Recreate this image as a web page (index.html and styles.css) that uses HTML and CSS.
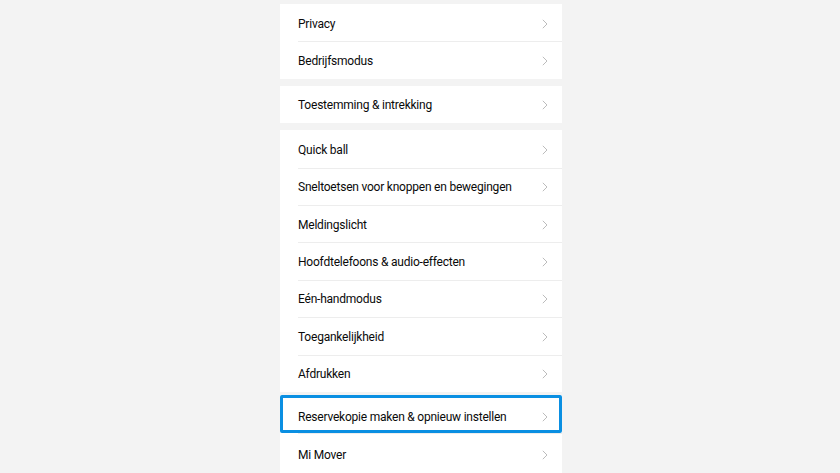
FILE: index.html
```html
<!DOCTYPE html>
<html>
<head>
<meta charset="utf-8">
<link rel="stylesheet" href="styles.css">
</head>
<body>
<div class="page">
  <div class="panel">
    <div class="group g1">
      <div class="row"><span class="label">Privacy</span><svg class="chev" width="6" height="10" viewBox="0 0 6 10"><polyline points="0.8,0.8 5,5 0.8,9.2"/></svg></div>
      <div class="row"><span class="label">Bedrijfsmodus</span><svg class="chev" width="6" height="10" viewBox="0 0 6 10"><polyline points="0.8,0.8 5,5 0.8,9.2"/></svg></div>
    </div>
    <div class="group">
      <div class="row"><span class="label">Toestemming &amp; intrekking</span><svg class="chev" width="6" height="10" viewBox="0 0 6 10"><polyline points="0.8,0.8 5,5 0.8,9.2"/></svg></div>
    </div>
    <div class="group">
      <div class="row"><span class="label">Quick ball</span><svg class="chev" width="6" height="10" viewBox="0 0 6 10"><polyline points="0.8,0.8 5,5 0.8,9.2"/></svg></div>
      <div class="row"><span class="label">Sneltoetsen voor knoppen en bewegingen</span><svg class="chev" width="6" height="10" viewBox="0 0 6 10"><polyline points="0.8,0.8 5,5 0.8,9.2"/></svg></div>
      <div class="row"><span class="label">Meldingslicht</span><svg class="chev" width="6" height="10" viewBox="0 0 6 10"><polyline points="0.8,0.8 5,5 0.8,9.2"/></svg></div>
      <div class="row"><span class="label">Hoofdtelefoons &amp; audio-effecten</span><svg class="chev" width="6" height="10" viewBox="0 0 6 10"><polyline points="0.8,0.8 5,5 0.8,9.2"/></svg></div>
      <div class="row"><span class="label">Eén-handmodus</span><svg class="chev" width="6" height="10" viewBox="0 0 6 10"><polyline points="0.8,0.8 5,5 0.8,9.2"/></svg></div>
      <div class="row"><span class="label">Toegankelijkheid</span><svg class="chev" width="6" height="10" viewBox="0 0 6 10"><polyline points="0.8,0.8 5,5 0.8,9.2"/></svg></div>
      <div class="row"><span class="label">Afdrukken</span><svg class="chev" width="6" height="10" viewBox="0 0 6 10"><polyline points="0.8,0.8 5,5 0.8,9.2"/></svg></div>
    </div>
    <div class="group g4">
      <div class="row highlighted"><span class="label">Reservekopie maken &amp; opnieuw instellen</span><svg class="chev" width="6" height="10" viewBox="0 0 6 10"><polyline points="0.8,0.8 5,5 0.8,9.2"/></svg></div>
      <div class="row last"><span class="label">Mi Mover</span><svg class="chev" width="6" height="10" viewBox="0 0 6 10"><polyline points="0.8,0.8 5,5 0.8,9.2"/></svg></div>
    </div>
  </div>
</div>
</body>
</html>
```

FILE: styles.css
```css
html, body {
  margin: 0;
  padding: 0;
  background: #f3f3f3;
  height: 473px;
  overflow: hidden;
}

.page {
  padding-left: 280px;
  padding-top: 4px;
}

.panel {
  width: 282px;
  display: flex;
  flex-direction: column;
  gap: 7px;
}

.group {
  background: #ffffff;
  display: flex;
  flex-direction: column;
}

.g4 {
  margin-top: -3.5px;
}

.row {
  position: relative;
  height: 37.4px;
  box-sizing: border-box;
  padding-left: 18px;
  padding-right: 14px;
  padding-top: 2px;
  display: flex;
  align-items: center;
  justify-content: space-between;
  font-family: Roboto, "Noto Sans", sans-serif;
  font-size: 12px;
  letter-spacing: -0.22px;
  color: #0a0a0a;
}

.row + .row::before {
  content: "";
  position: absolute;
  left: 18px;
  right: 0;
  top: 0;
  height: 1px;
  background: #ededed;
}

.g4 .row {
  height: 38px;
}

.g4 .row.highlighted {
  padding-top: 5px;
}

.g4 .row.last {
  height: 40px;
  padding-top: 4px;
}

.chev {
  flex: none;
  fill: none;
  stroke: #bcbcbc;
  stroke-width: 1;
}

.highlighted::after {
  content: "";
  position: absolute;
  inset: 0;
  border: 3px solid #0a8fe2;
  border-radius: 2px;
}
```
